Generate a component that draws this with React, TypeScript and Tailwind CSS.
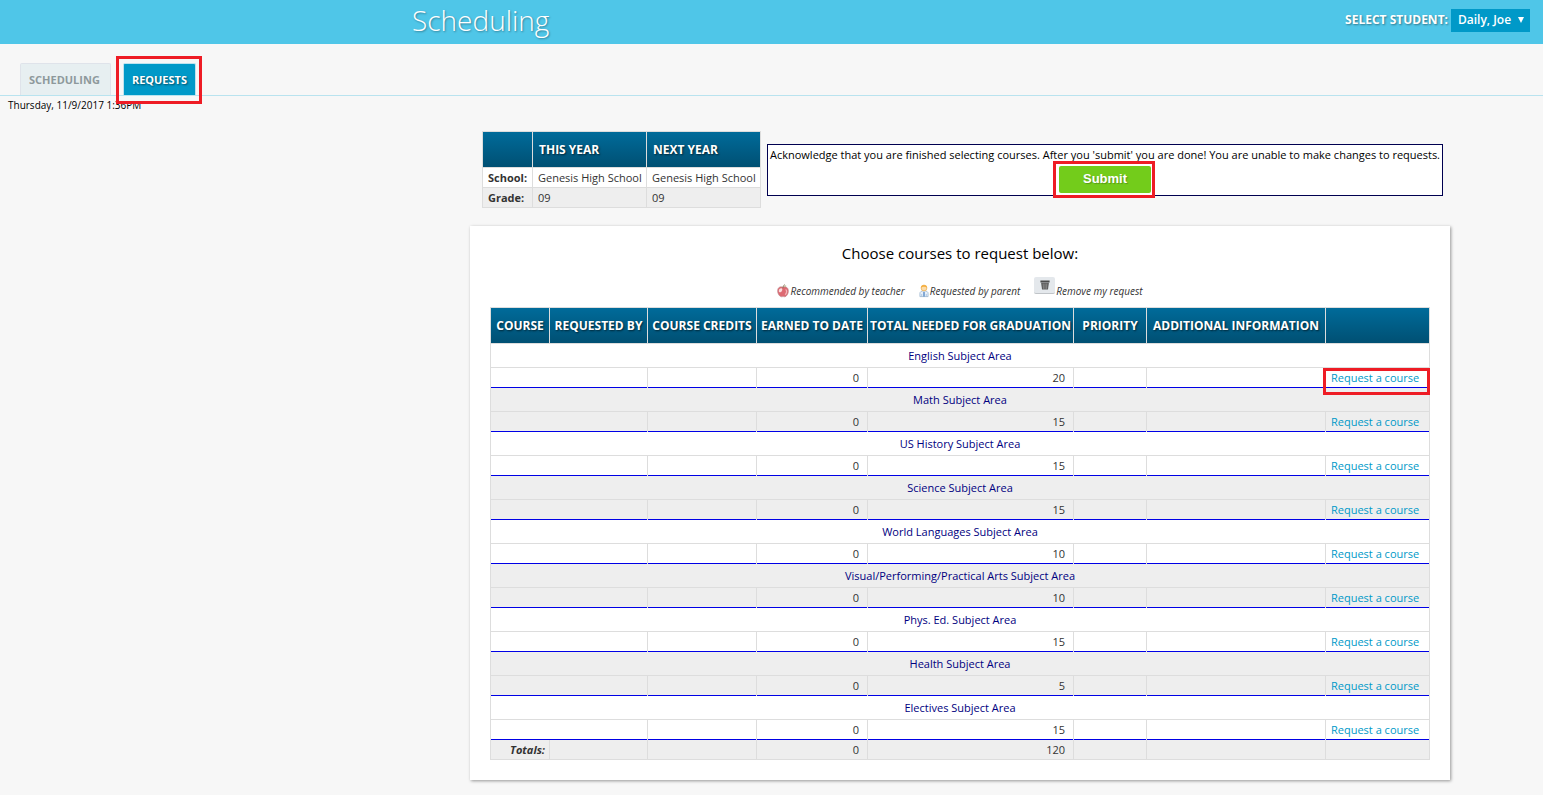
import React from "react";

type Area = { name: string; earned: number; needed: number };

const areas: Area[] = [
  { name: "English Subject Area", earned: 0, needed: 20 },
  { name: "Math Subject Area", earned: 0, needed: 15 },
  { name: "US History Subject Area", earned: 0, needed: 15 },
  { name: "Science Subject Area", earned: 0, needed: 15 },
  { name: "World Languages Subject Area", earned: 0, needed: 10 },
  { name: "Visual/Performing/Practical Arts Subject Area", earned: 0, needed: 10 },
  { name: "Phys. Ed. Subject Area", earned: 0, needed: 15 },
  { name: "Health Subject Area", earned: 0, needed: 5 },
  { name: "Electives Subject Area", earned: 0, needed: 15 },
];

const columns = [
  { label: "COURSE", width: "w-[59px]" },
  { label: "REQUESTED BY", width: "w-[98px]" },
  { label: "COURSE CREDITS", width: "w-[109px]" },
  { label: "EARNED TO DATE", width: "w-[111px]" },
  { label: "TOTAL NEEDED FOR GRADUATION", width: "w-[206px]" },
  { label: "PRIORITY", width: "w-[73px]" },
  { label: "ADDITIONAL INFORMATION", width: "w-[179px]" },
  { label: "", width: "w-[104px]" },
];

const headRow =
  "h-9 bg-linear-to-b from-[#006b9a] to-[#004f72] text-xs font-bold whitespace-nowrap text-white text-shadow-[1px_1px_2px_rgb(0_0_0/0.6)]";
const frame = "table-fixed border-separate border-spacing-0 border-t border-r border-[#dddddd]";
const cell = "border-b border-l border-[#dddddd]";
const lastLine = "border-l border-[#dddddd] shadow-[inset_0_-1px_0_#0000e6]";

function Highlight({ className }: { className: string }) {
  return (
    <span
      aria-hidden="true"
      className={"pointer-events-none absolute z-10 border-3 border-[#ee1c25] " + className}
    />
  );
}

function AppleIcon() {
  return (
    <svg width="12" height="14" viewBox="0 0 12 14" aria-hidden="true">
      <path d="M6 3.400C4.500 2.200.6 2.600.6 6.800c0 3.200 2.200 6 4 6 .6 0 1-.2 1.500-.2s.9.2 1.500.2c1.700 0 3.800-2.800 3.800-5.900 0-4.100-3.900-4.700-5.400-3.500z" fill="#dd6a72" stroke="#b98a8e" strokeWidth=".6" />
      <path d="M1.800 7c0-1.900 1.200-2.800 2.500-2.800 1.200 0 1.300 1.400.6 2.800-.7 1.400-3 2.200-3.100 0z" fill="#fbdcde" />
      <path d="M8.600 5.500c1.500.8 1.400 3.500-.4 5.200" stroke="#f3b4b8" strokeWidth="1.300" fill="none" />
      <path d="M6 4.200C5.900 2.800 6.400 1.500 7.700.7" stroke="#7a5a3c" strokeWidth=".9" fill="none" />
      <path d="M7 2.600c.5-1 1.300-1.300 2.300-1.200-.3 1-1.100 1.500-2.300 1.200z" fill="#9dba80" />
    </svg>
  );
}

function ParentIcon() {
  return (
    <svg width="10" height="14" viewBox="0 0 10 14" aria-hidden="true">
      <path d="M.9 12.600V9.500c0-1.700 1.200-2.600 4.100-2.600s4.100.9 4.100 2.600v3.100z" fill="#e6effa" stroke="#8eacc9" strokeWidth=".7" />
      <path d="M5 8v4.500" stroke="#3f78bb" strokeWidth="1.200" />
      <path d="M2.700 10v2.500M7.300 10v2.500" stroke="#9ab8d8" strokeWidth=".7" />
      <circle cx="5" cy="4" r="2.900" fill="#fcdca8" stroke="#e9a94a" strokeWidth=".7" />
      <path d="M1.900 3.800C1.900.2 8.100.2 8.100 3.800 6.500 2.500 3.500 2.500 1.900 3.800z" fill="#f5b040" />
    </svg>
  );
}

function TrashIcon() {
  return (
    <svg width="10" height="10" viewBox="0 0 10 10" aria-hidden="true">
      <path d="M.4.500h9.200v2H.4z" fill="#4b4b4b" />
      <path d="M1.100 2.800h7.800l-.9 6.800H2z" fill="#5c5c5c" />
      <path d="M3.200 3.600l.3 5.200M5 3.600v5.200M6.800 3.600l-.3 5.200" stroke="#999" strokeWidth=".7" />
    </svg>
  );
}

export default function App() {
  return (
    <div className="min-h-screen bg-[#f7f7f7] font-['Open_Sans',sans-serif] text-[11px] leading-4 text-[#333333]">
      <header className="flex h-11 items-center justify-between bg-[#4fc6e8] pr-[13px] pb-1 pl-[412px] text-white">
        <h1 className="text-[28px] leading-10 font-light text-shadow-[1px_1px_2px_rgb(0_0_0/0.35)]">Scheduling</h1>
        <div className="flex items-center gap-[3px]">
          <label htmlFor="student" className="text-xs font-bold text-shadow-[1px_1px_2px_rgb(0_0_0/0.4)]">
            SELECT STUDENT:
          </label>
          <div className="relative">
            <select id="student" className="block h-[23px] w-[79px] appearance-none bg-[#0099c8] pl-[7px] text-xs font-semibold text-white">
              <option>Daily, Joe</option>
            </select>
            <svg className="pointer-events-none absolute top-2 right-1.5" width="6" height="6" viewBox="0 0 6 6" aria-hidden="true">
              <path d="M0 0h6L3 6z" fill="#fff" />
            </svg>
          </div>
        </div>
      </header>

      <nav className="flex items-end gap-3 border-b border-[#b9e3ef] pt-[19px] pl-5">
        <a href="#scheduling" className="flex h-8 items-center rounded-t-xs border border-b-0 border-[#dfe3ea] bg-[#e7eff1] pr-2.5 pl-2 font-bold text-[#8e999c]">
          SCHEDULING
        </a>
        <div className="relative">
          <a href="#requests" aria-current="page" className="flex h-8 items-center rounded-t-xs border border-b-0 border-[#bfe3ef] bg-[#0099c8] px-2 font-bold text-white text-shadow-[1px_1px_2px_rgb(0_0_0/0.5)]">
            REQUESTS
          </a>
          <Highlight className="-top-[7px] -right-1.5 -bottom-[9px] -left-[7px]" />
        </div>
      </nav>

      <p className="pt-px pl-2 text-[10px] text-black">Thursday, 11/9/2017 1:36PM</p>

      <main className="flex flex-col items-center pt-[18px] pb-3 pl-[377px]">
        <section className="flex w-[980px] items-center gap-1.5 pl-3">
          <table className={frame + " w-[279px] bg-white text-left"}>
            <colgroup>
              <col className="w-[50px]" />
              <col className="w-[114px]" />
              <col className="w-[114px]" />
            </colgroup>
            <thead>
              <tr className={headRow}>
                <th className={cell} />
                <th scope="col" className={cell + " px-1.5"}>THIS YEAR</th>
                <th scope="col" className={cell + " px-1.5"}>NEXT YEAR</th>
              </tr>
            </thead>
            <tbody className="whitespace-nowrap">
              <tr className="h-5">
                <th scope="row" className={cell + " pl-[5px] font-bold"}>School:</th>
                <td className={cell + " pl-[5px]"}>Genesis High School</td>
                <td className={cell + " pl-[5px]"}>Genesis High School</td>
              </tr>
              <tr className="h-5 bg-[#eeeeee]">
                <th scope="row" className={cell + " pl-[5px] font-bold"}>Grade:</th>
                <td className={cell + " pl-[5px]"}>09</td>
                <td className={cell + " pl-[5px]"}>09</td>
              </tr>
            </tbody>
          </table>
          <div className="flex h-[52px] w-[676px] flex-col items-center border border-[#000050] bg-white pt-0.5 whitespace-nowrap text-black">
            <p>Acknowledge that you are finished selecting courses. After you 'submit' you are done! You are unable to make changes to requests.</p>
            <div className="relative mt-[3px]">
              <button type="button" className="block h-[27px] w-[92px] rounded-xs bg-[#73cc1b] font-['Liberation_Sans',sans-serif] text-[13px] font-bold text-white text-shadow-[1px_1px_1px_rgb(0_0_0/0.25)]">
                Submit
              </button>
              <Highlight className="-inset-y-[5px] -right-1 -left-1.5" />
            </div>
          </div>
        </section>

        <section className="mt-[18px] w-[980px] bg-white px-5 pt-[15px] pb-5 shadow-[1px_1px_3px_rgb(0_0_0/0.4)]">
          <h2 className="text-center text-[15px] leading-6 text-black">Choose courses to request below:</h2>
          <div className="flex h-[42px] items-end justify-center gap-3.5 pb-[9px] text-[10px] italic">
            <span className="flex items-end gap-px">
              <AppleIcon />
              <span className="-mb-px">Recommended by teacher</span>
            </span>
            <span className="flex items-end gap-px">
              <ParentIcon />
              <span className="-mb-px">Requested by parent</span>
            </span>
            <span className="flex items-end gap-px">
              <span className="mb-1 flex h-[17px] w-[21px] items-center justify-center rounded-xs border-b border-[#c0c4c8] bg-[#e4e8ec]">
                <TrashIcon />
              </span>
              <span className="-mb-px">Remove my request</span>
            </span>
          </div>

          <table className={frame + " w-full"}>
            <colgroup>
              {columns.map((c, i) => (
                <col key={i} className={c.width} />
              ))}
            </colgroup>
            <thead>
              <tr className={headRow}>
                {columns.map((c, i) => (
                  <th key={i} scope="col" className={cell + " text-center"}>{c.label}</th>
                ))}
              </tr>
            </thead>
            {areas.map((a, i) => (
              <tbody key={a.name} className={i % 2 ? "bg-[#eeeeee]" : "bg-white"}>
                <tr className="h-6">
                  <th scope="rowgroup" colSpan={8} className={cell + " text-center font-normal text-[#000080]"}>{a.name}</th>
                </tr>
                <tr className="h-5">
                  <td colSpan={2} className={lastLine} />
                  <td className={lastLine} />
                  <td className={lastLine + " pr-2 text-right"}>{a.earned}</td>
                  <td className={lastLine + " pr-2 text-right"}>{a.needed}</td>
                  <td className={lastLine} />
                  <td className={lastLine} />
                  <td className={lastLine + " pl-[5px]"}>
                    <div className="relative">
                      <a href="#request" className="text-[#0099c8]">Request a course</a>
                      {i === 0 && <Highlight className="-top-0.5 -right-px -bottom-[9px] -left-2" />}
                    </div>
                  </td>
                </tr>
              </tbody>
            ))}
            <tfoot>
              <tr className="h-5 bg-[#eeeeee]">
                <th scope="row" className={cell + " pr-1 text-right font-bold italic"}>Totals:</th>
                <td className={cell} />
                <td className={cell} />
                <td className={cell + " pr-2 text-right"}>0</td>
                <td className={cell + " pr-2 text-right"}>120</td>
                <td className={cell} />
                <td className={cell} />
                <td className={cell} />
              </tr>
            </tfoot>
          </table>
        </section>
      </main>
    </div>
  );
}
